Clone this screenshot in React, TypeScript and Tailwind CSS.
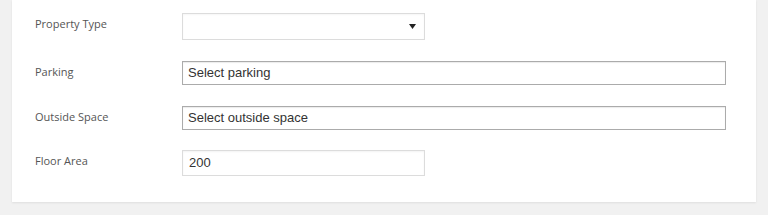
import React from "react";

const labelCls =
  "w-[170px] shrink-0 pt-[3px] pl-[23px] text-[11px] leading-4 text-[#555] font-['Open_Sans',sans-serif]";

function Row({ label, mt, children }: { label: string; mt: string; children: React.ReactNode }) {
  return (
    <div className={`flex items-start ${mt}`}>
      <div className={labelCls}>{label}</div>
      {children}
    </div>
  );
}

export default function App() {
  return (
    <div className="h-[215px] w-[768px] bg-[#f1f1f1] pb-[13px]">
      <div className="mx-[12px] h-[202px] bg-white pt-[13px] shadow-[0_1px_2px_rgba(0,0,0,0.08)]">
        <Row label="Property Type" mt="mt-0">
          <div className="flex h-[27px] w-[243px] items-center justify-end border border-[#dcdcdc] bg-white pr-[8px] shadow-[inset_0_1px_2px_rgba(0,0,0,0.04)]">
            <svg width="7" height="5" viewBox="0 0 7 5">
              <path d="M0 0h7L3.5 5z" fill="#222" />
            </svg>
          </div>
        </Row>
        <Row label="Parking" mt="mt-[21px]">
          <div className="flex h-[24px] w-[544px] items-center border border-[#ababab] bg-white pl-[5px] font-['Liberation_Sans',Arial,sans-serif] text-[13px] text-[#333] shadow-[inset_0_1px_1px_rgba(0,0,0,0.08)]">
            Select parking
          </div>
        </Row>
        <Row label="Outside Space" mt="mt-[21px]">
          <div className="flex h-[24px] w-[544px] items-center border border-[#ababab] bg-white pl-[5px] font-['Liberation_Sans',Arial,sans-serif] text-[13px] text-[#333] shadow-[inset_0_1px_1px_rgba(0,0,0,0.08)]">
            Select outside space
          </div>
        </Row>
        <Row label="Floor Area" mt="mt-[20px]">
          <div className="flex h-[26px] w-[243px] items-center border border-[#dcdcdc] bg-white pl-[6px] font-['Liberation_Sans',Arial,sans-serif] text-[13px] text-[#333] shadow-[inset_0_1px_2px_rgba(0,0,0,0.05)]">
            200
          </div>
        </Row>
      </div>
    </div>
  );
}
